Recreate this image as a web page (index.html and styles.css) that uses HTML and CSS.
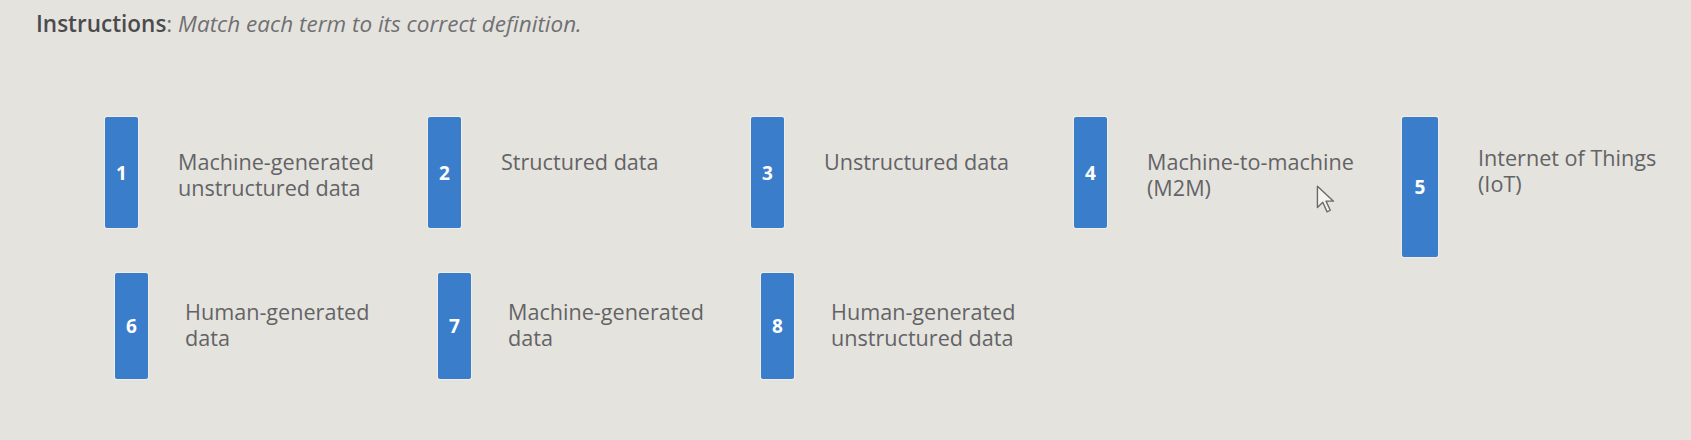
FILE: index.html
```html
<!DOCTYPE html>
<html>
<head>
<meta charset="utf-8">
<link rel="stylesheet" href="styles.css">
</head>
<body>
<div class="page">
  <p class="instructions"><span class="label">Instructions</span>: <em>Match each term to its correct definition.</em></p>
  <div class="row row-one">
    <div class="item"><div class="bar">1</div><div class="term">Machine-generated<br>unstructured data</div></div>
    <div class="item"><div class="bar">2</div><div class="term">Structured data</div></div>
    <div class="item"><div class="bar">3</div><div class="term">Unstructured data</div></div>
    <div class="item"><div class="bar">4</div><div class="term">Machine-to-machine<br>(M2M)</div></div>
    <div class="item item-last"><div class="bar bar-tall">5</div><div class="term term-high">Internet of Things<br>(IoT)</div></div>
  </div>
  <div class="row row-two">
    <div class="item"><div class="bar">6</div><div class="term">Human-generated<br>data</div></div>
    <div class="item"><div class="bar">7</div><div class="term">Machine-generated<br>data</div></div>
    <div class="item"><div class="bar">8</div><div class="term">Human-generated<br>unstructured data</div></div>
  </div>
  <svg class="cursor" width="22" height="30" viewBox="0 0 20 28"><path d="M2 2 L2 22 L7 17 L11 26 L14 24.5 L10 16 L17 16 Z" fill="#f4f3f0" stroke="#6a6a6a" stroke-width="1.3" stroke-linejoin="round"/></svg>
</div>
</body>
</html>
```
FILE: styles.css
```css
html, body {
  margin: 0;
  padding: 0;
  background: #e5e3de;
}
.page {
  position: relative;
  width: 1691px;
  height: 440px;
  font-family: "Open Sans", "Liberation Sans", sans-serif;
  color: #66666a;
  overflow: hidden;
}
.instructions {
  margin: 0;
  padding: 9px 0 0 36px;
  font-size: 22.5px;
  line-height: 30px;
  color: #707074;
}
.instructions .label {
  font-weight: 600;
  color: #4b4b4e;
}
.instructions em {
  font-style: italic;
}
.row {
  display: flex;
}
.row-one {
  padding: 78px 0 0 105px;
}
.row-two {
  padding: 16px 0 0 115px;
}
.item {
  display: flex;
  width: 323px;
  flex: none;
}
.item-last {
  margin-left: 5px;
}
.bar {
  width: 33px;
  height: 111px;
  flex: none;
  background: #3a7ecb;
  border-radius: 2px;
  color: #fff;
  font-weight: 700;
  font-size: 19px;
  display: flex;
  align-items: center;
  justify-content: center;
  box-shadow: 0 0 0 1px rgba(255,255,255,0.35);
}
.bar-tall {
  width: 36px;
  height: 140px;
}
.row-two .bar {
  height: 106px;
}
.term {
  padding: 32px 0 0 40px;
  font-size: 21.6px;
  line-height: 26px;
  color: #636366;
}
.term-high {
  padding-top: 28px;
}
.row-two .term {
  padding-top: 26px;
  padding-left: 37px;
}
.cursor {
  position: absolute;
  left: 1315px;
  top: 184px;
}
```
